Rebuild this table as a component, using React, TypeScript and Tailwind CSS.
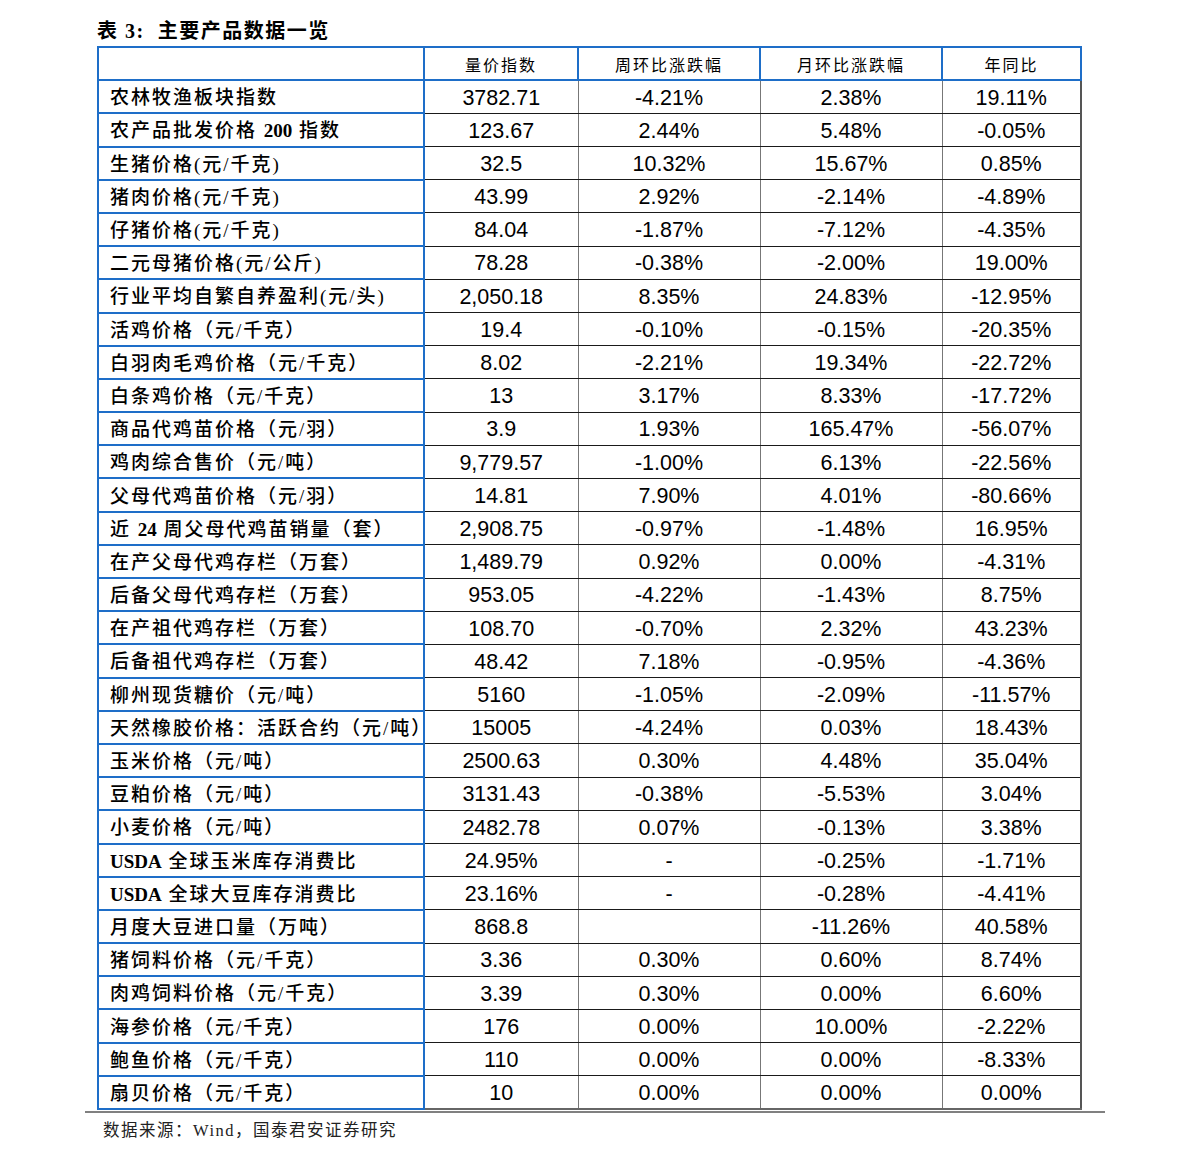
import React from "react";

const rows: string[][] = [
  ["农林牧渔板块指数", "3782.71", "-4.21%", "2.38%", "19.11%"],
  ["农产品批发价格 200 指数", "123.67", "2.44%", "5.48%", "-0.05%"],
  ["生猪价格(元/千克)", "32.5", "10.32%", "15.67%", "0.85%"],
  ["猪肉价格(元/千克)", "43.99", "2.92%", "-2.14%", "-4.89%"],
  ["仔猪价格(元/千克)", "84.04", "-1.87%", "-7.12%", "-4.35%"],
  ["二元母猪价格(元/公斤)", "78.28", "-0.38%", "-2.00%", "19.00%"],
  ["行业平均自繁自养盈利(元/头)", "2,050.18", "8.35%", "24.83%", "-12.95%"],
  ["活鸡价格（元/千克）", "19.4", "-0.10%", "-0.15%", "-20.35%"],
  ["白羽肉毛鸡价格（元/千克）", "8.02", "-2.21%", "19.34%", "-22.72%"],
  ["白条鸡价格（元/千克）", "13", "3.17%", "8.33%", "-17.72%"],
  ["商品代鸡苗价格（元/羽）", "3.9", "1.93%", "165.47%", "-56.07%"],
  ["鸡肉综合售价（元/吨）", "9,779.57", "-1.00%", "6.13%", "-22.56%"],
  ["父母代鸡苗价格（元/羽）", "14.81", "7.90%", "4.01%", "-80.66%"],
  ["近 24 周父母代鸡苗销量（套）", "2,908.75", "-0.97%", "-1.48%", "16.95%"],
  ["在产父母代鸡存栏（万套）", "1,489.79", "0.92%", "0.00%", "-4.31%"],
  ["后备父母代鸡存栏（万套）", "953.05", "-4.22%", "-1.43%", "8.75%"],
  ["在产祖代鸡存栏（万套）", "108.70", "-0.70%", "2.32%", "43.23%"],
  ["后备祖代鸡存栏（万套）", "48.42", "7.18%", "-0.95%", "-4.36%"],
  ["柳州现货糖价（元/吨）", "5160", "-1.05%", "-2.09%", "-11.57%"],
  ["天然橡胶价格：活跃合约（元/吨）", "15005", "-4.24%", "0.03%", "18.43%"],
  ["玉米价格（元/吨）", "2500.63", "0.30%", "4.48%", "35.04%"],
  ["豆粕价格（元/吨）", "3131.43", "-0.38%", "-5.53%", "3.04%"],
  ["小麦价格（元/吨）", "2482.78", "0.07%", "-0.13%", "3.38%"],
  ["USDA 全球玉米库存消费比", "24.95%", "-", "-0.25%", "-1.71%"],
  ["USDA 全球大豆库存消费比", "23.16%", "-", "-0.28%", "-4.41%"],
  ["月度大豆进口量（万吨）", "868.8", "", "-11.26%", "40.58%"],
  ["猪饲料价格（元/千克）", "3.36", "0.30%", "0.60%", "8.74%"],
  ["肉鸡饲料价格（元/千克）", "3.39", "0.30%", "0.00%", "6.60%"],
  ["海参价格（元/千克）", "176", "0.00%", "10.00%", "-2.22%"],
  ["鲍鱼价格（元/千克）", "110", "0.00%", "0.00%", "-8.33%"],
  ["扇贝价格（元/千克）", "10", "0.00%", "0.00%", "0.00%"],
];

const headers = ["量价指数", "周环比涨跌幅", "月环比涨跌幅", "年同比"];

function Label({ text }: { text: string }) {
  const parts = text.split(/([A-Za-z0-9]+)/);
  return (
    <>
      {parts.map((p, i) =>
        /^[A-Za-z0-9]+$/.test(p) ? (
          <span key={i} className="font-bold tracking-normal">
            {p}
          </span>
        ) : (
          <span key={i}>{p}</span>
        )
      )}
    </>
  );
}

export default function App() {
  return (
    <div className="w-[1191px] h-[1156px] bg-white text-black pt-[17px]">
      <div className="ml-[85px] w-[1020px]">
        <div
          className="pl-[12px] h-[29px] text-[20px] font-bold leading-[28px] tracking-[1.5px]"
          style={{ fontFamily: '"Liberation Serif", "Noto Sans CJK SC", serif' }}
        >
          表 3:&nbsp;&nbsp;主要产品数据一览
        </div>
        <table className="ml-[12px] border-collapse table-fixed w-[983px]">
          <colgroup>
            <col className="w-[326px]" />
            <col className="w-[154px]" />
            <col className="w-[182px]" />
            <col className="w-[182px]" />
            <col className="w-[139px]" />
          </colgroup>
          <thead>
            <tr>
              <th className="h-[33.2px] p-0 border-2 border-[#1e6ec8]"></th>
              {headers.map((h) => (
                <th
                  key={h}
                  className="h-[33.2px] p-0 pt-[1px] border-2 border-[#1e6ec8] text-[16px] font-normal tracking-[2px] text-center"
                  style={{ fontFamily: '"Noto Sans CJK SC", sans-serif' }}
                >
                  {h}
                </th>
              ))}
            </tr>
          </thead>
          <tbody>
            {rows.map((r, ri) => (
              <tr key={ri}>
                <td
                  className="h-[33.2px] p-0 pl-[11px] pt-[2px] border-2 border-[#1e6ec8] text-[19px] font-medium tracking-[2px] text-left whitespace-nowrap leading-none"
                  style={{ fontFamily: '"Liberation Serif", "Noto Sans CJK SC", serif' }}
                >
                  <Label text={r[0]} />
                </td>
                {r.slice(1).map((v, ci) => (
                  <td
                    key={ci}
                    className={
                      "h-[33.2px] p-0 pt-[3px] text-center text-[21.5px] leading-none border-y border-y-[#1a1a1a] border-x border-x-[#777777] " +
                      (ci === 3 ? "border-r-2 border-r-[#555555] " : "") +
                      (ri === rows.length - 1 ? "border-b-2 border-b-[#666666]" : "")
                    }
                    style={{ fontFamily: '"Liberation Sans", Arial, sans-serif' }}
                  >
                    {v}
                  </td>
                ))}
              </tr>
            ))}
          </tbody>
        </table>
        <div className="h-[2px] bg-[#808080] mt-[1px]"></div>
        <div
          className="pl-[18px] pt-[6px] text-[16.5px] text-[#222222] tracking-[1.5px]"
          style={{ fontFamily: '"Liberation Serif", "Noto Sans CJK SC", serif' }}
        >
          数据来源：Wind，国泰君安证券研究
        </div>
      </div>
    </div>
  );
}
